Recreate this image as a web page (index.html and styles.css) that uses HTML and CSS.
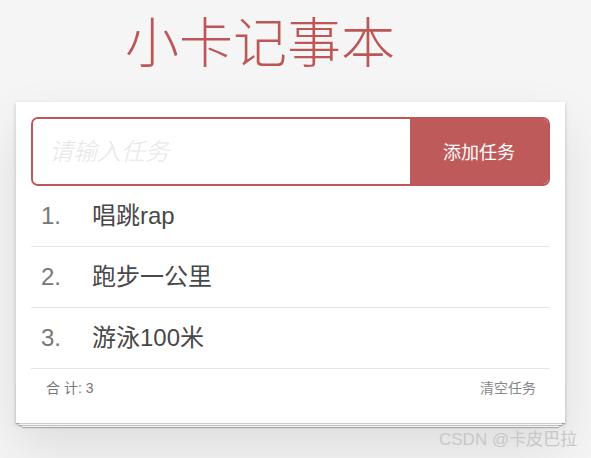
FILE: index.html
```html
<!DOCTYPE html>
<html lang="zh">
<head>
<meta charset="utf-8">
<title>小卡记事本</title>
<link rel="stylesheet" href="styles.css">
</head>
<body>
<header class="header">
  <h1 class="title">小卡记事本</h1>
</header>
<section class="card">
  <div class="input-row">
    <input class="task-input" type="text" placeholder="请输入任务">
    <button class="add-btn">添加任务</button>
  </div>
  <ul class="list">
    <li class="item"><span class="num">1.</span><span class="text">唱跳rap</span></li>
    <li class="item"><span class="num">2.</span><span class="text">跑步一公里</span></li>
    <li class="item"><span class="num">3.</span><span class="text">游泳100米</span></li>
  </ul>
  <footer class="footer">
    <span class="count">合 计: 3</span>
    <span class="clear">清空任务</span>
  </footer>
</section>
<div class="watermark">CSDN @卡皮巴拉</div>
</body>
</html>
```
FILE: styles.css
```css
* { box-sizing: border-box; }
html, body { margin: 0; padding: 0; }
body {
  background: #f5f5f5;
  font-family: "Liberation Sans", "Noto Sans CJK SC", sans-serif;
  width: 591px;
  height: 458px;
  overflow: hidden;
  position: relative;
}
.header {
  height: 102px;
  padding-left: 125px;
  padding-top: 2px;
}
.title {
  margin: 0;
  font-family: "Noto Sans CJK SC", sans-serif;
  font-weight: 300;
  font-size: 54px;
  line-height: 76px;
  color: rgba(175, 47, 47, 0.8);
}
.card {
  position: relative;
  margin-left: 16px;
  width: 549px;
  height: 321px;
  background: #fff;
  padding: 15px 15px 0;
  box-shadow: 0 2px 4px 0 rgba(0,0,0,0.2), 0 25px 50px 0 rgba(0,0,0,0.1);
}
.card::after {
  content: "";
  position: absolute;
  left: 0;
  right: 0;
  bottom: 0;
  height: 40px;
  box-shadow:
    0 1px 1px rgba(0,0,0,0.2),
    0 5px 0 -3px #fff,
    0 6px 1px -3px rgba(0,0,0,0.25),
    0 10px 0 -6px #fff,
    0 11px 1px -6px rgba(0,0,0,0.25);
  pointer-events: none;
}
.input-row {
  display: flex;
  height: 69px;
  border: 2px solid #bd5757;
  border-radius: 7px;
  overflow: hidden;
}
.task-input {
  flex: 1;
  border: 0;
  outline: none;
  padding: 0 0 0 16px;
  font-family: "Liberation Sans", "Noto Sans CJK SC", sans-serif;
  font-size: 24px;
  font-weight: 300;
  font-style: italic;
  color: #333;
  background: #fff;
}
.task-input::placeholder {
  color: #e6e6e6;
  font-style: italic;
}
.add-btn {
  width: 138px;
  border: 0;
  background: #bf5a5a;
  color: #fff;
  font-family: "Noto Sans CJK SC", sans-serif;
  font-size: 18px;
  padding: 0 0 2px;
}
.list {
  list-style: none;
  margin: 0;
  padding: 0;
}
.item {
  display: flex;
  align-items: baseline;
  height: 61px;
  line-height: 60px;
  border-bottom: 1px solid #e6e6e6;
  font-size: 24px;
}
.num {
  width: 61px;
  padding-left: 10px;
  color: #777;
}
.text {
  color: #484848;
  font-family: "Liberation Sans", "Noto Sans CJK SC", sans-serif;
}
.footer {
  display: flex;
  justify-content: space-between;
  padding: 10px 14px 0 15px;
  font-size: 14px;
  line-height: 18px;
  color: #777;
}
.clear {
  color: #888;
}
.watermark {
  position: absolute;
  left: 439px;
  top: 430px;
  font-size: 17px;
  line-height: 20px;
  color: #c8c8c8;
  font-family: "Liberation Sans", "Noto Sans CJK SC", sans-serif;
}
```
